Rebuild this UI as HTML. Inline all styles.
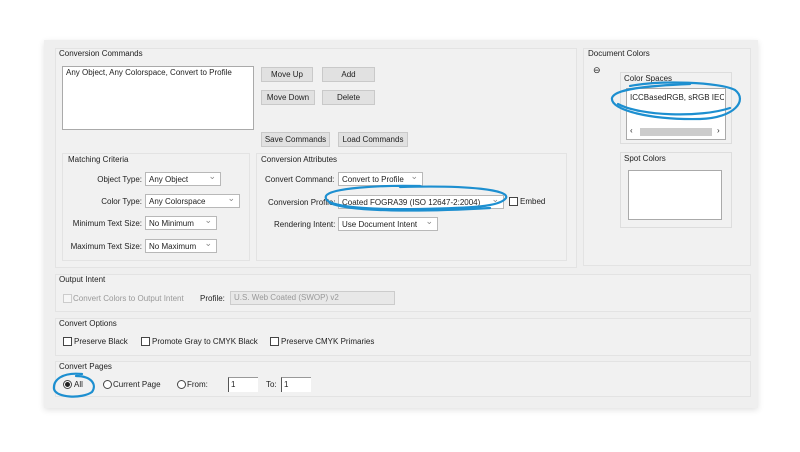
<!DOCTYPE html>
<html><head><style>
*{box-sizing:border-box;margin:0;padding:0}
body{width:800px;height:452px;background:#fff;font-family:"Liberation Sans",sans-serif;font-size:8px;color:#222;position:relative;overflow:hidden}
.a{position:absolute}
.panel{left:44px;top:40px;width:714px;height:368px;background:#efefef;box-shadow:0 2px 6px rgba(0,0,0,.12)}
.grp{border:1px solid #e3e3e3;background:#f1f1f1}
.t{white-space:nowrap}
.btn{background:#e1e1e1;border:1px solid #c9c9c9;text-align:center;line-height:13px}
.sel{background:#fff;border:1px solid #b8b8b8;padding-left:3px;line-height:13px;white-space:nowrap}
.sel:after{content:"⌄";position:absolute;right:4px;top:-3px;color:#888;font-size:9px}
.box{background:#fff;border:1px solid #aaa}
.cb{width:9px;height:9px;border:1px solid #444;background:#fff;display:inline-block}
.lab{text-align:right;width:80px}
</style></head><body>
<div class="a panel"></div>
<div class="a grp" style="left:55px;top:48px;width:522px;height:220px"></div>
<div class="a t" style="left:59px;top:49px">Conversion Commands</div>
<div class="a box" style="left:62px;top:66px;width:192px;height:64px"></div>
<div class="a t" style="left:66px;top:68px">Any Object, Any Colorspace, Convert to Profile</div>
<div class="a btn" style="left:261px;top:67px;width:52px;height:15px">Move Up</div>
<div class="a btn" style="left:322px;top:67px;width:53px;height:15px">Add</div>
<div class="a btn" style="left:261px;top:90px;width:54px;height:15px">Move Down</div>
<div class="a btn" style="left:322px;top:90px;width:53px;height:15px">Delete</div>
<div class="a btn" style="left:261px;top:132px;width:69px;height:15px">Save Commands</div>
<div class="a btn" style="left:338px;top:132px;width:70px;height:15px">Load Commands</div>

<div class="a grp" style="left:62px;top:153px;width:188px;height:108px"></div>
<div class="a t" style="left:68px;top:155px">Matching Criteria</div>
<div class="a t lab" style="left:62px;top:175px">Object Type:</div>
<div class="a sel" style="left:145px;top:172px;width:76px;height:14px">Any Object</div>
<div class="a t lab" style="left:62px;top:197px">Color Type:</div>
<div class="a sel" style="left:145px;top:194px;width:95px;height:14px">Any Colorspace</div>
<div class="a t lab" style="left:62px;top:219px">Minimum Text Size:</div>
<div class="a sel" style="left:145px;top:216px;width:72px;height:14px">No Minimum</div>
<div class="a t lab" style="left:62px;top:242px">Maximum Text Size:</div>
<div class="a sel" style="left:145px;top:239px;width:72px;height:14px">No Maximum</div>

<div class="a grp" style="left:256px;top:153px;width:311px;height:108px"></div>
<div class="a t" style="left:261px;top:155px">Conversion Attributes</div>
<div class="a t" style="left:265px;top:175px">Convert Command:</div>
<div class="a sel" style="left:338px;top:172px;width:85px;height:14px">Convert to Profile</div>
<div class="a t" style="left:268px;top:198px">Conversion Profile:</div>
<div class="a sel" style="left:338px;top:195px;width:166px;height:14px">Coated FOGRA39 (ISO 12647-2:2004)</div>
<div class="a cb" style="left:509px;top:197px"></div>
<div class="a t" style="left:520px;top:197px">Embed</div>
<div class="a t" style="left:274px;top:220px">Rendering Intent:</div>
<div class="a sel" style="left:338px;top:217px;width:100px;height:14px">Use Document Intent</div>

<div class="a grp" style="left:583px;top:48px;width:168px;height:218px"></div>
<div class="a t" style="left:588px;top:49px">Document Colors</div>
<div class="a t" style="left:593px;top:65px;font-size:9px">⊖</div>
<div class="a grp" style="left:620px;top:72px;width:112px;height:72px;border-color:#ddd"></div>
<div class="a t" style="left:624px;top:74px">Color Spaces</div>
<div class="a box" style="left:626px;top:88px;width:100px;height:52px"></div>
<div class="a t" style="left:630px;top:93px;width:94px;overflow:hidden">ICCBasedRGB, sRGB IEC61966</div>
<div class="a" style="left:640px;top:128px;width:72px;height:8px;background:#ccc"></div>
<div class="a t" style="left:630px;top:126px">‹</div><div class="a t" style="left:717px;top:126px">›</div>
<div class="a grp" style="left:620px;top:152px;width:112px;height:76px;border-color:#ddd"></div>
<div class="a t" style="left:624px;top:154px">Spot Colors</div>
<div class="a box" style="left:628px;top:170px;width:94px;height:50px"></div>

<div class="a grp" style="left:55px;top:274px;width:696px;height:38px"></div>
<div class="a t" style="left:59px;top:275px">Output Intent</div>
<div class="a" style="left:63px;top:294px;width:9px;height:9px;border:1px solid #ccc;background:#f6f6f6"></div>
<div class="a t" style="left:73px;top:294px;color:#999">Convert Colors to Output Intent</div>
<div class="a t" style="left:200px;top:294px">Profile:</div>
<div class="a" style="left:230px;top:291px;width:165px;height:14px;border:1px solid #ccc;background:#e8e8e8;color:#999;padding-left:3px;line-height:12px">U.S. Web Coated (SWOP) v2</div>

<div class="a grp" style="left:55px;top:318px;width:696px;height:38px"></div>
<div class="a t" style="left:59px;top:319px">Convert Options</div>
<div class="a cb" style="left:63px;top:337px"></div><div class="a t" style="left:74px;top:337px">Preserve Black</div>
<div class="a cb" style="left:141px;top:337px"></div><div class="a t" style="left:152px;top:337px">Promote Gray to CMYK Black</div>
<div class="a cb" style="left:270px;top:337px"></div><div class="a t" style="left:281px;top:337px">Preserve CMYK Primaries</div>

<div class="a grp" style="left:55px;top:361px;width:696px;height:36px"></div>
<div class="a t" style="left:59px;top:362px">Convert Pages</div>
<div class="a" style="left:63px;top:380px;width:9px;height:9px;border:1px solid #444;border-radius:50%;background:#fff"><div style="width:5px;height:5px;margin:1px;border-radius:50%;background:#222"></div></div>
<div class="a t" style="left:74px;top:380px">All</div>
<div class="a" style="left:103px;top:380px;width:9px;height:9px;border:1px solid #444;border-radius:50%;background:#fff"></div>
<div class="a t" style="left:113px;top:380px">Current Page</div>
<div class="a" style="left:177px;top:380px;width:9px;height:9px;border:1px solid #444;border-radius:50%;background:#fff"></div>
<div class="a t" style="left:187px;top:380px">From:</div>
<div class="a" style="left:228px;top:377px;width:30px;height:15px;background:#fff;border-left:1px solid #555;border-top:1px solid #999;padding-left:2px;line-height:13px">1</div>
<div class="a t" style="left:266px;top:380px">To:</div>
<div class="a" style="left:281px;top:377px;width:30px;height:15px;background:#fff;border-left:1px solid #555;border-top:1px solid #999;padding-left:2px;line-height:13px">1</div>

<svg class="a" style="left:0;top:0" width="800" height="452">
<g fill="none" stroke="#1d8fd0" stroke-width="2.2" stroke-linecap="round">
<path d="M420 186 C380 185 330 188 326 196 C322 206 360 210 420 209 C470 208 500 207 506 198 C510 190 470 185 400 187"/>
<path d="M330 203 C350 212 420 212 490 208"/>
<path d="M630 86 C660 80 720 82 735 90 C748 100 735 118 700 119 C650 120 610 110 612 98 C614 90 640 86 690 84"/>
<path d="M618 104 C640 116 700 118 730 108"/>
<path d="M82 374 C62 372 53 380 54 389 C56 398 82 399 92 392 C97 385 92 376 76 376"/>
</g></svg>
</body></html>
